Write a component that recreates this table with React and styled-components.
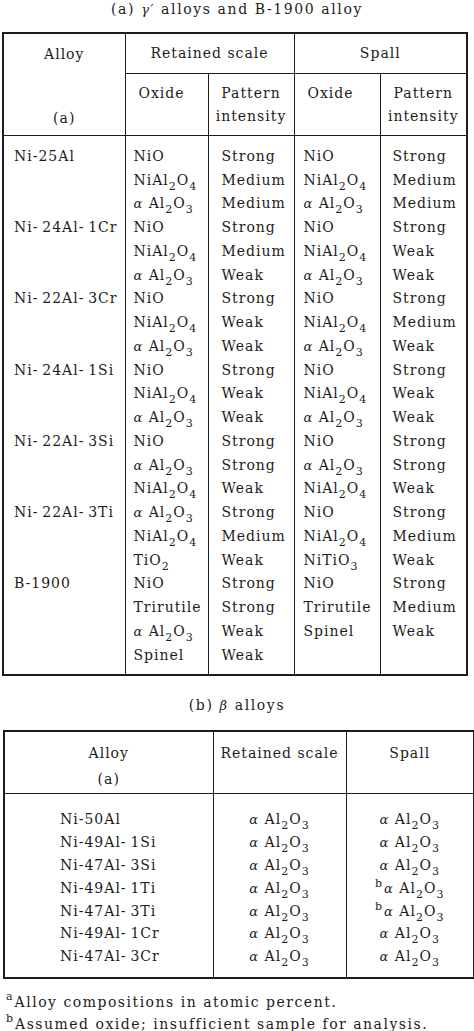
import React from "react";
import styled, { createGlobalStyle } from "styled-components";

const GlobalStyle = createGlobalStyle`
  html, body {
    margin: 0;
    padding: 0;
    background: #fff;
  }
  body {
    font-family: "DejaVu Serif", "Liberation Serif", serif;
    color: #1c1c1c;
    font-size: 14px;
    letter-spacing: 1px;
  }
`;

const Page = styled.div`
  width: 474px;
  display: flex;
  flex-direction: column;
`;

const Caption = styled.div`
  text-align: center;
  line-height: 18px;
  letter-spacing: 1.6px;
  margin-top: ${({ $top }) => $top || 0}px;
  margin-bottom: ${({ $bottom }) => $bottom || 0}px;
`;

const Greek = styled.span`
  font-style: italic;
  font-size: 13px;
  line-height: 0;
`;

const Table = styled.table`
  border-collapse: collapse;
  table-layout: fixed;
  width: ${({ $width }) => $width}px;
  margin-left: ${({ $left }) => $left}px;
  border: 2px solid #1c1c1c;
`;

const HeadCell = styled.th`
  font-weight: normal;
  border: 1.5px solid #1c1c1c;
  padding: ${({ $pad }) => $pad || "0"};
  text-align: ${({ $align }) => $align || "center"};
  vertical-align: ${({ $valign }) => $valign || "top"};
  line-height: ${({ $lh }) => $lh || 23}px;
  height: ${({ $h }) => ($h ? `${$h}px` : "auto")};
  box-sizing: border-box;
`;

const HeadLine = styled.div`
  margin-top: ${({ $gap }) => $gap || 0}px;
`;

const BodyRow = styled.tr`
  height: ${({ $h }) => $h}px;
`;

const Cell = styled.td`
  padding: 0 0 0 ${({ $indent }) => $indent || 0}px;
  border-left: 1.5px solid #1c1c1c;
  border-right: 1.5px solid #1c1c1c;
  text-align: ${({ $align }) => $align || "left"};
  white-space: nowrap;
  line-height: 16px;
  vertical-align: middle;
`;

const Spacer = styled.tr`
  height: ${({ $h }) => $h}px;
  td {
    padding: 0;
    border-left: 1.5px solid #1c1c1c;
    border-right: 1.5px solid #1c1c1c;
  }
`;

const Sub = styled.span`
  font-size: 11px;
  position: relative;
  top: 5px;
  line-height: 0;
`;

const Sup = styled.span`
  font-size: 11px;
  position: relative;
  top: -6px;
  line-height: 0;
  margin-right: 1px;
`;

const Notes = styled.div`
  margin-top: 12px;
  padding-left: 17px;
  line-height: 22px;
  letter-spacing: 1.5px;
`;

const NoteMark = styled.span`
  font-size: 11px;
  position: relative;
  top: -7px;
  line-height: 0;
  margin-left: -11px;
  margin-right: 2px;
  letter-spacing: 0;
`;

const Chem = ({ text }) => {
  if (!text) return null;
  const parts = [];
  let rest = text;
  if (rest.startsWith("α ")) {
    parts.push(<Greek key="a">α</Greek>, " ");
    rest = rest.slice(2);
  }
  rest.split(/(\d)/).forEach((p, i) => {
    if (!p) return;
    parts.push(/\d/.test(p) ? <Sub key={i}>{p}</Sub> : p);
  });
  return <>{parts}</>;
};

// thin space after the hyphens, as in the typed original
const t = "\u2009";

const groupsA = [
  { alloy: "Ni-25Al", rows: [["NiO", "Strong", "NiO", "Strong"], ["NiAl2O4", "Medium", "NiAl2O4", "Medium"], ["α Al2O3", "Medium", "α Al2O3", "Medium"]] },
  { alloy: `Ni-${t}24Al-${t}1Cr`, rows: [["NiO", "Strong", "NiO", "Strong"], ["NiAl2O4", "Medium", "NiAl2O4", "Weak"], ["α Al2O3", "Weak", "α Al2O3", "Weak"]] },
  { alloy: `Ni-${t}22Al-${t}3Cr`, rows: [["NiO", "Strong", "NiO", "Strong"], ["NiAl2O4", "Weak", "NiAl2O4", "Medium"], ["α Al2O3", "Weak", "α Al2O3", "Weak"]] },
  { alloy: `Ni-${t}24Al-${t}1Si`, rows: [["NiO", "Strong", "NiO", "Strong"], ["NiAl2O4", "Weak", "NiAl2O4", "Weak"], ["α Al2O3", "Weak", "α Al2O3", "Weak"]] },
  { alloy: `Ni-${t}22Al-${t}3Si`, rows: [["NiO", "Strong", "NiO", "Strong"], ["α Al2O3", "Strong", "α Al2O3", "Strong"], ["NiAl2O4", "Weak", "NiAl2O4", "Weak"]] },
  { alloy: `Ni-${t}22Al-${t}3Ti`, rows: [["α Al2O3", "Strong", "NiO", "Strong"], ["NiAl2O4", "Medium", "NiAl2O4", "Medium"], ["TiO2", "Weak", "NiTiO3", "Weak"]] },
  { alloy: "B-1900", rows: [["NiO", "Strong", "NiO", "Strong"], ["Trirutile", "Strong", "Trirutile", "Medium"], ["α Al2O3", "Weak", "Spinel", "Weak"], ["Spinel", "Weak", "", ""]] },
];

const rowsB = [
  ["Ni-50Al", false],
  [`Ni-49Al-${t}1Si`, false],
  [`Ni-47Al-${t}3Si`, false],
  [`Ni-49Al-${t}1Ti`, true],
  [`Ni-47Al-${t}3Ti`, true],
  [`Ni-49Al-${t}1Cr`, false],
  [`Ni-47Al-${t}3Cr`, false],
];

const indentsA = [10, 8, 13, 9, 12];
const ROW_A = 23.76;
const ROW_B = 22.8;

function GammaTable() {
  return (
    <Table $width={464} $left={2}>
      <colgroup>
        <col style={{ width: 122 }} />
        <col style={{ width: 83 }} />
        <col style={{ width: 86 }} />
        <col style={{ width: 86 }} />
        <col style={{ width: 87 }} />
      </colgroup>
      <thead>
        <tr>
          <HeadCell rowSpan={2} $pad="8px 0 0 0" $lh={24}>
            <HeadLine>Alloy</HeadLine>
            <HeadLine $gap={40}>(a)</HeadLine>
          </HeadCell>
          <HeadCell colSpan={2} $valign="middle" $h={40}>Retained scale</HeadCell>
          <HeadCell colSpan={2} $valign="middle" $h={40}>Spall</HeadCell>
        </tr>
        <tr>
          <HeadCell $align="left" $pad="8px 0 7px 13px" $h={62}>Oxide</HeadCell>
          <HeadCell $pad="8px 0 7px 0" $h={62}>Pattern<br />intensity</HeadCell>
          <HeadCell $align="left" $pad="8px 0 7px 13px" $h={62}>Oxide</HeadCell>
          <HeadCell $pad="8px 0 7px 0" $h={62}>Pattern<br />intensity</HeadCell>
        </tr>
      </thead>
      <tbody>
        <Spacer $h={9}><td /><td /><td /><td /><td /></Spacer>
        {groupsA.map((g) =>
          g.rows.map((r, i) => (
            <BodyRow key={g.alloy + i} $h={ROW_A}>
              <Cell $indent={indentsA[0]}>{i === 0 ? g.alloy : ""}</Cell>
              <Cell $indent={indentsA[1]}><Chem text={r[0]} /></Cell>
              <Cell $indent={indentsA[2]}>{r[1]}</Cell>
              <Cell $indent={indentsA[3]}><Chem text={r[2]} /></Cell>
              <Cell $indent={indentsA[4]}>{r[3]}</Cell>
            </BodyRow>
          ))
        )}
        <Spacer $h={8}><td /><td /><td /><td /><td /></Spacer>
      </tbody>
    </Table>
  );
}

function BetaTable() {
  return (
    <Table $width={470} $left={3}>
      <colgroup>
        <col style={{ width: 209 }} />
        <col style={{ width: 133 }} />
        <col style={{ width: 128 }} />
      </colgroup>
      <thead>
        <tr>
          <HeadCell $pad="8px 0 1px 0" $lh={26} $h={61}>
            <HeadLine>Alloy</HeadLine>
            <HeadLine>(a)</HeadLine>
          </HeadCell>
          <HeadCell $pad="8px 0 1px 0" $lh={26} $h={61}>Retained scale</HeadCell>
          <HeadCell $pad="8px 0 1px 0" $lh={26} $h={61}>Spall</HeadCell>
        </tr>
      </thead>
      <tbody>
        <Spacer $h={15}><td /><td /><td /></Spacer>
        {rowsB.map(([alloy, assumed]) => (
          <BodyRow key={alloy} $h={ROW_B}>
            <Cell $indent={55}>{alloy}</Cell>
            <Cell $align="center"><Chem text="α Al2O3" /></Cell>
            <Cell $align="center">
              {assumed && <Sup>b</Sup>}
              <Chem text="α Al2O3" />
            </Cell>
          </BodyRow>
        ))}
        <Spacer $h={10}><td /><td /><td /></Spacer>
      </tbody>
    </Table>
  );
}

export default function App() {
  return (
    <Page>
      <GlobalStyle />
      <Caption $bottom={14}>
        (a) <Greek>γ′</Greek> alloys and B-1900 alloy
      </Caption>
      <GammaTable />
      <Caption $top={20} $bottom={16}>
        (b) <Greek>β</Greek> alloys
      </Caption>
      <BetaTable />
      <Notes>
        <div><NoteMark>a</NoteMark>Alloy compositions in atomic percent.</div>
        <div><NoteMark>b</NoteMark>Assumed oxide; insufficient sample for analysis.</div>
      </Notes>
    </Page>
  );
}
